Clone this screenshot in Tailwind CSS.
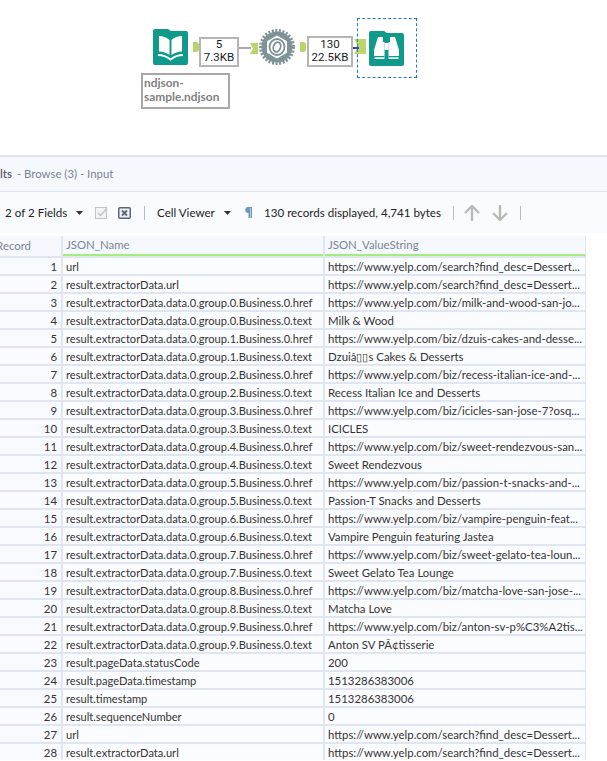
<!DOCTYPE html>
<html lang="en">
<head>
    <meta charset="UTF-8">
    <title>Results - Browse (3) - Input</title>
    <script src="https://cdn.jsdelivr.net/npm/@tailwindcss/browser@4"></script>
</head>
<body class="w-[607px] h-[761px] overflow-hidden bg-white font-['Lato',sans-serif] text-[11.4px] text-[#333]">

    <!-- Workflow canvas -->
    <div class="relative h-[155px] bg-white">
        <!-- input tool -->
        <svg class="absolute left-[153px] top-[29px]" width="35" height="37" viewBox="0 0 35 37">
            <path d="M2 0H15L18 2H33a2 2 0 0 1 2 2V34a2 2 0 0 1-2 2H2a2 2 0 0 1-2-2V2a2 2 0 0 1 2-2z" fill="#0f9a8b"/>
            <path d="M6 7Q12 7 16.500 11V26Q12 22.500 6 22.500zM29 7Q23 7 18.500 11V26Q23 22.500 29 22.500z" fill="#fff"/>
            <path d="M5 26Q12 26 17.500 30.500Q23 26 30 26" fill="none" stroke="#fff" stroke-width="1.800"/>
        </svg>
        <!-- anchors and connections -->
        <div class="absolute left-[193px] top-[42px] w-[6px] h-[10px] rounded-r-[3px] bg-[#b9d46b]"></div>
        <div class="absolute left-[239px] top-[47px] w-[12px] h-[2px] bg-[#a9a9a9]"></div>
        <svg class="absolute left-[250px] top-[43px]" width="8" height="11" viewBox="0 0 8 11"><path d="M0 0H8V11H0L3 5.500z" fill="#b9d46b"/></svg>
        <div class="absolute left-[300px] top-[42px] w-[6px] h-[10px] rounded-r-[3px] bg-[#b9d46b]"></div>
        <div class="absolute left-[353px] top-[47px] w-[6px] h-[2px] bg-[#3a3ad0]"></div>
        <svg class="absolute left-[354px] top-[39px]" width="12" height="15" viewBox="0 0 12 15"><path d="M0 0H12V15H0L4 7.500z" fill="#bcd56f"/><rect x="0" y="8" width="5" height="2" fill="#3a3ad0"/></svg>
        <!-- record count boxes -->
        <div class="absolute left-[199px] top-[37px] w-[40px] h-[30px] border-2 border-[#b5b5b5] bg-white flex flex-col items-center justify-center pb-[2px] font-['Roboto',sans-serif] text-[11.500px] leading-[13px] text-[#222]"><span class="block">5</span><span class="block">7.3KB</span></div>
        <div class="absolute left-[307px] top-[36px] w-[46px] h-[31px] border-2 border-[#b5b5b5] bg-white flex flex-col items-center justify-center pb-[1px] font-['Roboto',sans-serif] text-[11.500px] leading-[13px] text-[#222]"><span class="block">130</span><span class="block">22.5KB</span></div>
        <!-- json parse tool -->
        <svg class="absolute left-[259px] top-[29px]" width="36" height="36" viewBox="0 0 36 36">
            <circle cx="18" cy="18" r="15.500" fill="#7f9298"/>
            <circle cx="18" cy="18" r="16.500" fill="none" stroke="#7f9298" stroke-width="3" stroke-dasharray="2 1.600"/>
            <path d="M18 6.500L28 12.200V23.800L18 29.500L8 23.800V12.200z" fill="#fff"/>
            <ellipse cx="18" cy="18" rx="7.500" ry="8" fill="none" stroke="#7f9298" stroke-width="1.800"/>
            <ellipse cx="18" cy="18" rx="3.500" ry="5" fill="none" stroke="#7f9298" stroke-width="1.800" transform="rotate(20 18 18)"/>
        </svg>
        <!-- browse tool -->
        <div class="absolute left-[357px] top-[18px] w-[60px] h-[60px] border border-dashed border-[#1b7fc4]"></div>
        <svg class="absolute left-[369px] top-[31px]" width="35" height="35" viewBox="0 0 35 35">
            <path d="M2 0H15L18 2H33a2 2 0 0 1 2 2V33a2 2 0 0 1-2 2H2a2 2 0 0 1-2-2V2a2 2 0 0 1 2-2z" fill="#0f9a8b"/>
            <path d="M9 6H14V11H15.500V28H5.500V26H5V19zM26 6H21V11H19.500V28H29.500V26H30V19z" fill="#fff"/>
            <rect x="15.500" y="12" width="4" height="7" fill="#fff"/>
            <rect x="5" y="25" width="10.500" height="1.300" fill="#0f9a8b"/>
            <rect x="19.500" y="25" width="10.500" height="1.300" fill="#0f9a8b"/>
        </svg>
        <!-- annotation -->
        <div class="absolute left-[141px] top-[73px] w-[89px] h-[36px] border-2 border-[#a8a8a8] bg-white px-[1px] pt-[1px] font-bold text-[11.9px] leading-[14px] text-[#808080]">ndjson-<br>sample.ndjson</div>
    </div>

    <!-- Results title bar -->
    <div class="h-[2px] bg-[#dfe5f0]"></div>
    <div class="h-[34px] flex items-center bg-[#f5f8fd] text-[#7b8494]">
        <span class="font-semibold text-[#555e6e]">lts</span><span class="ml-[5px]">- Browse (3) - Input</span>
    </div>
    <div class="h-[1px] bg-[#dfe5f0]"></div>

    <!-- Toolbar -->
    <div class="h-[41px] flex items-center bg-[#fafbfe] text-[11.6px] text-[#222]">
        <span class="ml-[5px] w-[62px] whitespace-nowrap">2 of 2 Fields</span>
        <svg class="ml-[9px]" width="7" height="4" viewBox="0 0 7 4"><path d="M0 0H7L3.500 4z" fill="#333"/></svg>
        <svg class="ml-[12px]" width="13" height="12" viewBox="0 0 13 12"><rect x="0.500" y="0.500" width="11" height="11" fill="#f2f3f5" stroke="#c4c4c4"/><path d="M3 6L5.500 8.500L12 1.500" fill="none" stroke="#c4c4c4" stroke-width="1.500"/></svg>
        <svg class="ml-[10px]" width="13" height="12" viewBox="0 0 13 12"><rect x="0.750" y="0.750" width="11.500" height="10.500" rx="1" fill="#eef0f4" stroke="#5d6678" stroke-width="1.500"/><path d="M4 3.500L9 8.500M9 3.500L4 8.500" stroke="#5d6678" stroke-width="1.800"/></svg>
        <div class="ml-[13px] w-px h-[14px] bg-[#bcbcbc]"></div>
        <span class="ml-[12px] w-[58px] whitespace-nowrap">Cell Viewer</span>
        <svg class="ml-[9px]" width="7" height="4" viewBox="0 0 7 4"><path d="M0 0H7L3.500 4z" fill="#333"/></svg>
        <svg class="ml-[14px]" width="7" height="11" viewBox="0 0 7 11"><path d="M3 0H7V11H5.500V1H5V11H3.500V6A3 3 0 0 1 3 0z" fill="#6f98b8"/></svg>
        <span class="ml-[12px] w-[177px] whitespace-nowrap">130 records displayed, 4,741 bytes</span>
        <div class="ml-[12px] w-px h-[14px] bg-[#bcbcbc]"></div>
        <svg class="ml-[10px]" width="16" height="16" viewBox="0 0 16 16"><path d="M1 8L8 1L15 8M8 1V16" fill="none" stroke="#b9b9b9" stroke-width="2.400"/></svg>
        <svg class="ml-[12px]" width="16" height="16" viewBox="0 0 16 16"><path d="M1 8L8 15L15 8M8 0V15" fill="none" stroke="#b9b9b9" stroke-width="2.400"/></svg>
        <div class="ml-[12px] w-px h-[14px] bg-[#bcbcbc]"></div>
    </div>
    <div class="h-[3px] bg-white"></div>

    <!-- Results table -->
    <div id="grid" class="w-[586px] grid grid-cols-[61px_260px_260px] gap-x-[2px] gap-y-[2px] bg-[#dfe6f2] pr-[1px]">
        <div class="h-[20px] flex items-center justify-end bg-[#f5f8fd] pr-[30px] text-[#7b8494] whitespace-nowrap">Record</div>
        <div class="h-[20px] flex items-center bg-[#f5f8fd] pl-[3px] border-b-2 border-[#a3ee7b] text-[#7b8494]">JSON_Name</div>
        <div class="h-[20px] flex items-center bg-[#f5f8fd] pl-[3px] border-b-2 border-[#a3ee7b] text-[#7b8494]">JSON_ValueString</div>
    </div>

    <script>
        const search = 'https://www.yelp.com/search?find_desc=Dessert...';
        const biz = (s) => 'https://www.yelp.com/biz/' + s;
        const grp = (n, k) => 'result.extractorData.data.0.group.' + n + '.Business.0.' + k;
        const rows = [
            ['url', search],
            ['result.extractorData.url', search],
            [grp(0, 'href'), biz('milk-and-wood-san-jo...')],
            [grp(0, 'text'), 'Milk & Wood'],
            [grp(1, 'href'), biz('dzuis-cakes-and-desse...')],
            [grp(1, 'text'), 'Dzuiâ\u25AF\u25AFs Cakes & Desserts'],
            [grp(2, 'href'), biz('recess-italian-ice-and-...')],
            [grp(2, 'text'), 'Recess Italian Ice and Desserts'],
            [grp(3, 'href'), biz('icicles-san-jose-7?osq...')],
            [grp(3, 'text'), 'ICICLES'],
            [grp(4, 'href'), biz('sweet-rendezvous-san...')],
            [grp(4, 'text'), 'Sweet Rendezvous'],
            [grp(5, 'href'), biz('passion-t-snacks-and-...')],
            [grp(5, 'text'), 'Passion-T Snacks and Desserts'],
            [grp(6, 'href'), biz('vampire-penguin-feat...')],
            [grp(6, 'text'), 'Vampire Penguin featuring Jastea'],
            [grp(7, 'href'), biz('sweet-gelato-tea-loun...')],
            [grp(7, 'text'), 'Sweet Gelato Tea Lounge'],
            [grp(8, 'href'), biz('matcha-love-san-jose-...')],
            [grp(8, 'text'), 'Matcha Love'],
            [grp(9, 'href'), biz('anton-sv-p%C3%A2tis...')],
            [grp(9, 'text'), 'Anton SV PÃ¢tisserie'],
            ['result.pageData.statusCode', '200'],
            ['result.pageData.timestamp', '1513286383006'],
            ['result.timestamp', '1513286383006'],
            ['result.sequenceNumber', '0'],
            ['url', search],
            ['result.extractorData.url', search],
        ];
        const grid = document.getElementById('grid');
        rows.forEach((r, i) => {
            const cells = [
                ['h-[16px] flex items-center justify-end bg-[#f8faff] pr-[4px] pt-[2px]', String(i + 1)],
                ['h-[16px] flex items-center bg-[#fbfcff] pl-[3px] pt-[2px] text-[11.1px] whitespace-nowrap overflow-hidden', r[0]],
                ['h-[16px] flex items-center bg-[#fbfcff] pl-[3px] pt-[1px] whitespace-nowrap overflow-hidden', r[1]],
            ];
            cells.forEach(([cls, text]) => {
                const el = document.createElement('div');
                el.className = cls;
                el.textContent = text;
                grid.appendChild(el);
            });
        });
    </script>
</body>
</html>
